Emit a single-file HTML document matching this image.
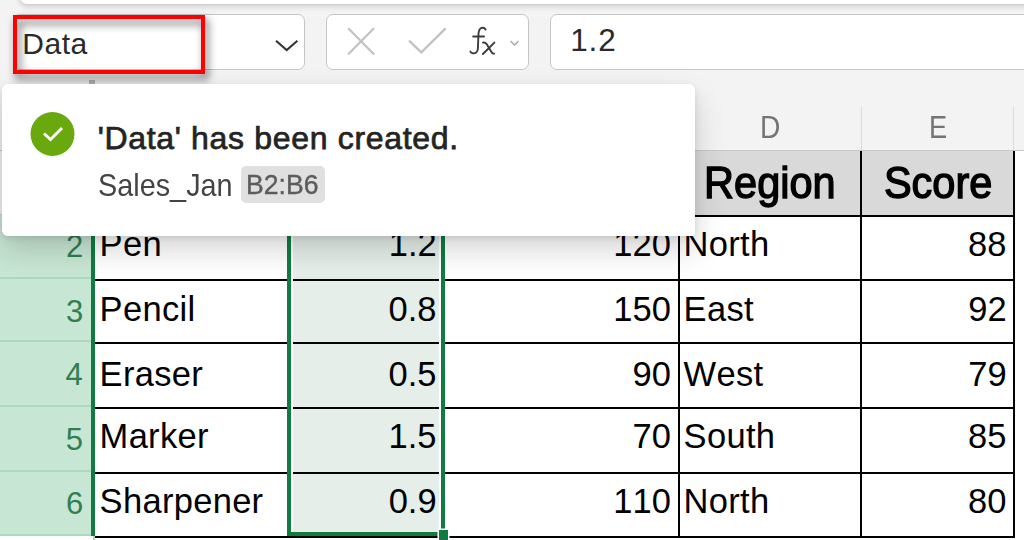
<!DOCTYPE html>
<html><head><meta charset="utf-8"><style>
html,body{margin:0;padding:0;}
body{width:1024px;height:540px;overflow:hidden;position:relative;background:#f3f3f3;font-family:"Liberation Sans",sans-serif;}
body>div,body>svg{position:absolute;}
.t{white-space:nowrap;line-height:1;font-kerning:none;}
</style></head><body>
<div style="left:20px;top:-30px;width:1100px;height:34px;background:#fff;border-radius:7px;box-shadow:0 1px 0 #d0d0d0,0 2px 6px rgba(0,0,0,.18);"></div>
<div style="left:13px;top:14px;width:292px;height:56px;background:#fff;border:1px solid #c6c6c6;border-radius:7px;box-sizing:border-box;"></div>
<div class="t" style="left:22.14px;top:29.40px;font-size:30px;font-weight:normal;color:#2a2a2a;letter-spacing:0.6px;">Data</div>
<svg style="left:0;top:0" width="1024" height="540"><polyline points="276,40.8 286.7,50 297.4,40.8" fill="none" stroke="#333" stroke-width="2.1"/></svg>
<div style="left:326px;top:14px;width:203px;height:56px;background:#fff;border:1px solid #c6c6c6;border-radius:7px;box-sizing:border-box;"></div>
<svg style="left:0;top:0" width="1024" height="540"><path d="M348.2 28.2 L374.2 54.6 M374 28.2 L348 54.6" stroke="#c2c2c2" stroke-width="2.2" fill="none"/><polyline points="409,40.6 421.3,52.4 445.6,28.4" fill="none" stroke="#c2c2c2" stroke-width="2.2"/><polyline points="510.5,41 514.5,45 518.5,41" fill="none" stroke="#a8a8a8" stroke-width="1.4"/></svg>
<svg style="left:0;top:0" width="1024" height="540" fill="none" stroke="#3c3c3c" stroke-width="1.9" stroke-linecap="round"><path d="M485.6,29.6 C484.8,27.6 481.6,27 479.9,29 C478.8,30.4 478.5,32.5 478.4,35.5 L477.9,48.5 C477.7,52.2 475.6,53.6 472.8,53.3 C471.6,53.2 470.9,52.6 470.4,51.6"/><path d="M473.2,36.5 L484,36.5"/><path d="M482.9,42.6 Q485.3,42 486.8,44.3 L491.6,52.2 Q492.6,53.9 494.2,53.6"/><path d="M494.4,42.6 L482.9,54"/></svg>
<div style="left:550px;top:14px;width:600px;height:56px;background:#fff;border:1px solid #c6c6c6;border-radius:7px;box-sizing:border-box;"></div>
<div class="t" style="left:570.20px;top:24.63px;font-size:31.5px;font-weight:normal;color:#2a2a2a;letter-spacing:0.9px;">1.2</div>
<div style="left:861px;top:107px;width:1px;height:44px;background:#dcdcdc;"></div>
<div style="left:1013px;top:107px;width:1px;height:44px;background:#dcdcdc;"></div>
<div style="left:0px;top:150px;width:1024px;height:1px;background:#c8c8c8;"></div>
<div style="left:89px;top:80px;width:6px;height:4px;background:#b8b8b8;"></div>
<div class="t" style="left:760.19px;top:110.91px;font-size:32px;font-weight:normal;color:#747474;transform:scale(0.88,1);transform-origin:0px 27.09px;">D</div>
<div class="t" style="left:929.27px;top:110.91px;font-size:32px;font-weight:normal;color:#747474;transform:scale(0.85,1);transform-origin:0px 27.09px;">E</div>
<div style="left:0px;top:151px;width:1024px;height:389px;background:#fff;"></div>
<div style="left:0px;top:151px;width:91px;height:64px;background:#f3f3f3;"></div>
<div style="left:0px;top:215px;width:91px;height:321px;background:#c8e6d4;"></div>
<div style="left:92.5px;top:536px;width:2px;height:4px;background:#c8c8c8;"></div>
<div style="left:0px;top:277.3px;width:91px;height:2px;background:#acd9bd;"></div>
<div style="left:0px;top:340.3px;width:91px;height:2px;background:#acd9bd;"></div>
<div style="left:0px;top:405.2px;width:91px;height:2px;background:#acd9bd;"></div>
<div style="left:0px;top:469.6px;width:91px;height:2px;background:#acd9bd;"></div>
<div style="left:0px;top:534px;width:91px;height:2px;background:#acd9bd;"></div>
<div style="left:0px;top:214px;width:91px;height:1px;background:#d0d0d0;"></div>
<div style="left:95px;top:151px;width:918px;height:64px;background:#d9d9d9;"></div>
<div style="left:292px;top:217px;width:147px;height:316px;background:#e5eee9;"></div>
<div style="left:95px;top:215px;width:920px;height:2px;background:#000;"></div>
<div style="left:95px;top:279.3px;width:920px;height:2px;background:#000;"></div>
<div style="left:95px;top:342.3px;width:920px;height:2px;background:#000;"></div>
<div style="left:95px;top:407.2px;width:920px;height:2px;background:#000;"></div>
<div style="left:95px;top:471.6px;width:920px;height:2px;background:#000;"></div>
<div style="left:95px;top:536px;width:920px;height:2px;background:#000;"></div>
<div style="left:678px;top:151px;width:2px;height:387px;background:#000;"></div>
<div style="left:860px;top:151px;width:2px;height:387px;background:#000;"></div>
<div style="left:1012.5px;top:151px;width:2px;height:387px;background:#000;"></div>
<div style="left:291px;top:217px;width:1.5px;height:316px;background:#fff;"></div>
<div style="left:439px;top:217px;width:2px;height:316px;background:#fff;"></div>
<div style="left:91px;top:215px;width:4px;height:321px;background:#107c41;"></div>
<div style="left:287px;top:151px;width:4px;height:385px;background:#107c41;"></div>
<div style="left:441px;top:151px;width:4px;height:378px;background:#107c41;"></div>
<div style="left:287px;top:532px;width:152px;height:4px;background:#107c41;"></div>
<div style="left:438.8px;top:530.2px;width:9.5px;height:12px;background:#107c41;box-shadow:0 0 0 1.5px #fff;"></div>
<div class="t" style="left:704.10px;top:163.46px;font-size:41.5px;font-weight:normal;color:#000;-webkit-text-stroke:1.3px #000;transform:scale(1,1.065);transform-origin:0px 35.14px;">Region</div>
<div class="t" style="left:883.92px;top:163.06px;font-size:41.5px;font-weight:normal;color:#000;-webkit-text-stroke:1.3px #000;transform:scale(1,1.065);transform-origin:0px 35.14px;">Score</div>
<div class="t" style="left:66.12px;top:231.05px;font-size:31px;font-weight:normal;color:#2f7f52;">2</div>
<div class="t" style="left:99.60px;top:226.99px;font-size:34.5px;font-weight:normal;color:#000;letter-spacing:0.3px;">Pen</div>
<div class="t" style="left:388.78px;top:226.99px;font-size:34.5px;font-weight:normal;color:#000;">1.2</div>
<div class="t" style="left:613.29px;top:226.99px;font-size:34.5px;font-weight:normal;color:#000;">120</div>
<div class="t" style="left:683.60px;top:226.99px;font-size:34.5px;font-weight:normal;color:#000;letter-spacing:0.3px;">North</div>
<div class="t" style="left:968.12px;top:226.99px;font-size:34.5px;font-weight:normal;color:#000;">88</div>
<div class="t" style="left:65.92px;top:295.85px;font-size:31px;font-weight:normal;color:#2f7f52;">3</div>
<div class="t" style="left:99.60px;top:291.69px;font-size:34.5px;font-weight:normal;color:#000;letter-spacing:0.3px;">Pencil</div>
<div class="t" style="left:388.54px;top:291.69px;font-size:34.5px;font-weight:normal;color:#000;">0.8</div>
<div class="t" style="left:613.29px;top:291.69px;font-size:34.5px;font-weight:normal;color:#000;">150</div>
<div class="t" style="left:683.60px;top:291.69px;font-size:34.5px;font-weight:normal;color:#000;letter-spacing:0.3px;">East</div>
<div class="t" style="left:968.36px;top:291.69px;font-size:34.5px;font-weight:normal;color:#000;">92</div>
<div class="t" style="left:65.47px;top:359.35px;font-size:31px;font-weight:normal;color:#2f7f52;">4</div>
<div class="t" style="left:99.60px;top:356.59px;font-size:34.5px;font-weight:normal;color:#000;letter-spacing:0.3px;">Eraser</div>
<div class="t" style="left:388.49px;top:356.59px;font-size:34.5px;font-weight:normal;color:#000;">0.5</div>
<div class="t" style="left:632.47px;top:356.59px;font-size:34.5px;font-weight:normal;color:#000;">90</div>
<div class="t" style="left:683.60px;top:356.59px;font-size:34.5px;font-weight:normal;color:#000;letter-spacing:0.3px;">West</div>
<div class="t" style="left:968.26px;top:356.59px;font-size:34.5px;font-weight:normal;color:#000;">79</div>
<div class="t" style="left:65.86px;top:423.55px;font-size:31px;font-weight:normal;color:#2f7f52;">5</div>
<div class="t" style="left:99.60px;top:418.99px;font-size:34.5px;font-weight:normal;color:#000;letter-spacing:0.3px;">Marker</div>
<div class="t" style="left:388.49px;top:418.99px;font-size:34.5px;font-weight:normal;color:#000;">1.5</div>
<div class="t" style="left:632.47px;top:418.99px;font-size:34.5px;font-weight:normal;color:#000;">70</div>
<div class="t" style="left:683.60px;top:418.99px;font-size:34.5px;font-weight:normal;color:#000;letter-spacing:0.3px;">South</div>
<div class="t" style="left:968.07px;top:418.99px;font-size:34.5px;font-weight:normal;color:#000;">85</div>
<div class="t" style="left:65.92px;top:488.25px;font-size:31px;font-weight:normal;color:#2f7f52;">6</div>
<div class="t" style="left:99.60px;top:483.99px;font-size:34.5px;font-weight:normal;color:#000;letter-spacing:0.3px;">Sharpener</div>
<div class="t" style="left:388.67px;top:483.99px;font-size:34.5px;font-weight:normal;color:#000;">0.9</div>
<div class="t" style="left:613.29px;top:483.99px;font-size:34.5px;font-weight:normal;color:#000;">110</div>
<div class="t" style="left:683.60px;top:483.99px;font-size:34.5px;font-weight:normal;color:#000;letter-spacing:0.3px;">North</div>
<div class="t" style="left:967.97px;top:483.99px;font-size:34.5px;font-weight:normal;color:#000;">80</div>
<div style="left:13px;top:15px;width:192px;height:59px;border:4px solid #ff0000;box-sizing:border-box;filter:drop-shadow(3px 5px 4px rgba(0,0,0,.62));"></div>
<div style="left:2px;top:84px;width:693px;height:152px;background:#fff;border-radius:6px 6px 2px 6px;box-shadow:0 14px 30px rgba(0,0,0,.17),0 2px 6px rgba(0,0,0,.10);"></div>
<svg style="left:0;top:0" width="1024" height="540"><circle cx="52.5" cy="134" r="22" fill="#6aa90d"/><polyline points="44,133.5 50.5,139.5 62,128" fill="none" stroke="#fff" stroke-width="2.9" stroke-linecap="butt" stroke-linejoin="miter"/></svg>
<div class="t" style="left:97.67px;top:122.11px;font-size:32px;font-weight:normal;color:#242424;letter-spacing:0.68px;-webkit-text-stroke:0.75px #242424;">'Data' has been created.</div>
<div class="t" style="left:97.99px;top:170.33px;font-size:31.5px;font-weight:normal;color:#444444;transform:scale(0.915,1);transform-origin:0px 26.67px;">Sales_Jan</div>
<div style="left:241px;top:166px;width:84px;height:37px;background:#e0e0e0;border-radius:5px;"></div>
<div class="t" style="left:246.12px;top:170.89px;font-size:28px;font-weight:normal;color:#5c5c5c;-webkit-text-stroke:0.4px #5c5c5c;transform:scale(0.95,1);transform-origin:0px 23.71px;">B2:B6</div>
</body></html>
